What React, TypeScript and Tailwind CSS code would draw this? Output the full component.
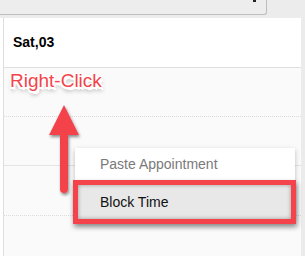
import React from 'react';

export default function App() {
  return (
    <div className="relative w-[305px] h-[256px] overflow-hidden bg-[#ececec] font-['Liberation_Sans',Arial,sans-serif]">
      {/* toolbar strip */}
      <div className="h-[18px] flex items-start">
        <div className="relative ml-[-10px] w-[277px] h-[15px] bg-[#ededed] border border-t-0 border-[#bdbdbd] rounded-br-[3px]">
          <span className="absolute left-[262px] top-[-1px] w-[3px] h-[3px] bg-[#222]" />
        </div>
      </div>

      <div className="flex h-[238px]">
        <div className="w-[301px] flex flex-col bg-white">
          <div className="ml-[3px] flex-1 flex flex-col border-l border-[#dedede]">
            <div className="h-[50px] flex items-center pl-[9px] border-b border-[#dedede] bg-white">
              <span className="text-[14px] font-bold text-black">Sat,03</span>
            </div>
            <div className="flex-1 flex flex-col bg-[#fafafa]">
              <div className="h-[49px] border-b border-dotted border-[#dcdcdc]" />
              <div className="h-[49px] border-b border-[#e4e4e4]" />
              <div className="h-[50px] border-b border-dotted border-[#dcdcdc]" />
              <div className="flex-1" />
            </div>
          </div>
        </div>
        <div className="flex-1 bg-[#ebebeb]" />
      </div>

      {/* annotation */}
      <span className="absolute left-[10px] top-[70px] text-[19px] leading-[22px] text-[#f4434b] [text-shadow:1.5px_0_0_#fff,-1.5px_0_0_#fff,0_1.5px_0_#fff,0_-1.5px_0_#fff,1.5px_1.5px_0_#fff,-1.5px_-1.5px_0_#fff,1.5px_-1.5px_0_#fff,-1.5px_1.5px_0_#fff,2px_3px_0_#fff,1px_4px_4px_rgba(0,0,0,0.45)]">
        Right-Click
      </span>

      <svg className="absolute left-[44px] top-[102px]" width="42" height="98" viewBox="0 0 42 98">
        <defs>
          <filter id="sh" x="-50%" y="-20%" width="200%" height="140%">
            <feDropShadow dx="1" dy="2" stdDeviation="1.5" floodColor="#000" floodOpacity="0.45" />
          </filter>
        </defs>
        <g filter="url(#sh)" fill="#f4434b">
          <polygon points="20,3 5,33 35,33" />
          <rect x="16" y="30" width="8" height="61" rx="4" />
        </g>
      </svg>

      {/* context menu */}
      <div className="absolute left-[75px] top-[148px] w-[220px] bg-white shadow-[0_2px_5px_rgba(0,0,0,0.25)]">
        <div className="h-[32px] flex items-center pl-[25px] text-[14px] text-[#7a7a7a]">Paste Appointment</div>
        <div className="h-[38px]" />
      </div>
      <div className="absolute left-[73px] top-[180px] w-[223px] h-[44px] border-[5px] border-[#f4434b] bg-[#e8e8e8] shadow-[1px_3px_5px_rgba(0,0,0,0.45)] flex items-center pl-[22px]">
        <div className="absolute inset-0 shadow-[inset_0_0_4px_rgba(0,0,0,0.35)]" />
        <span className="relative text-[14px] text-[#111]">Block Time</span>
      </div>
    </div>
  );
}
